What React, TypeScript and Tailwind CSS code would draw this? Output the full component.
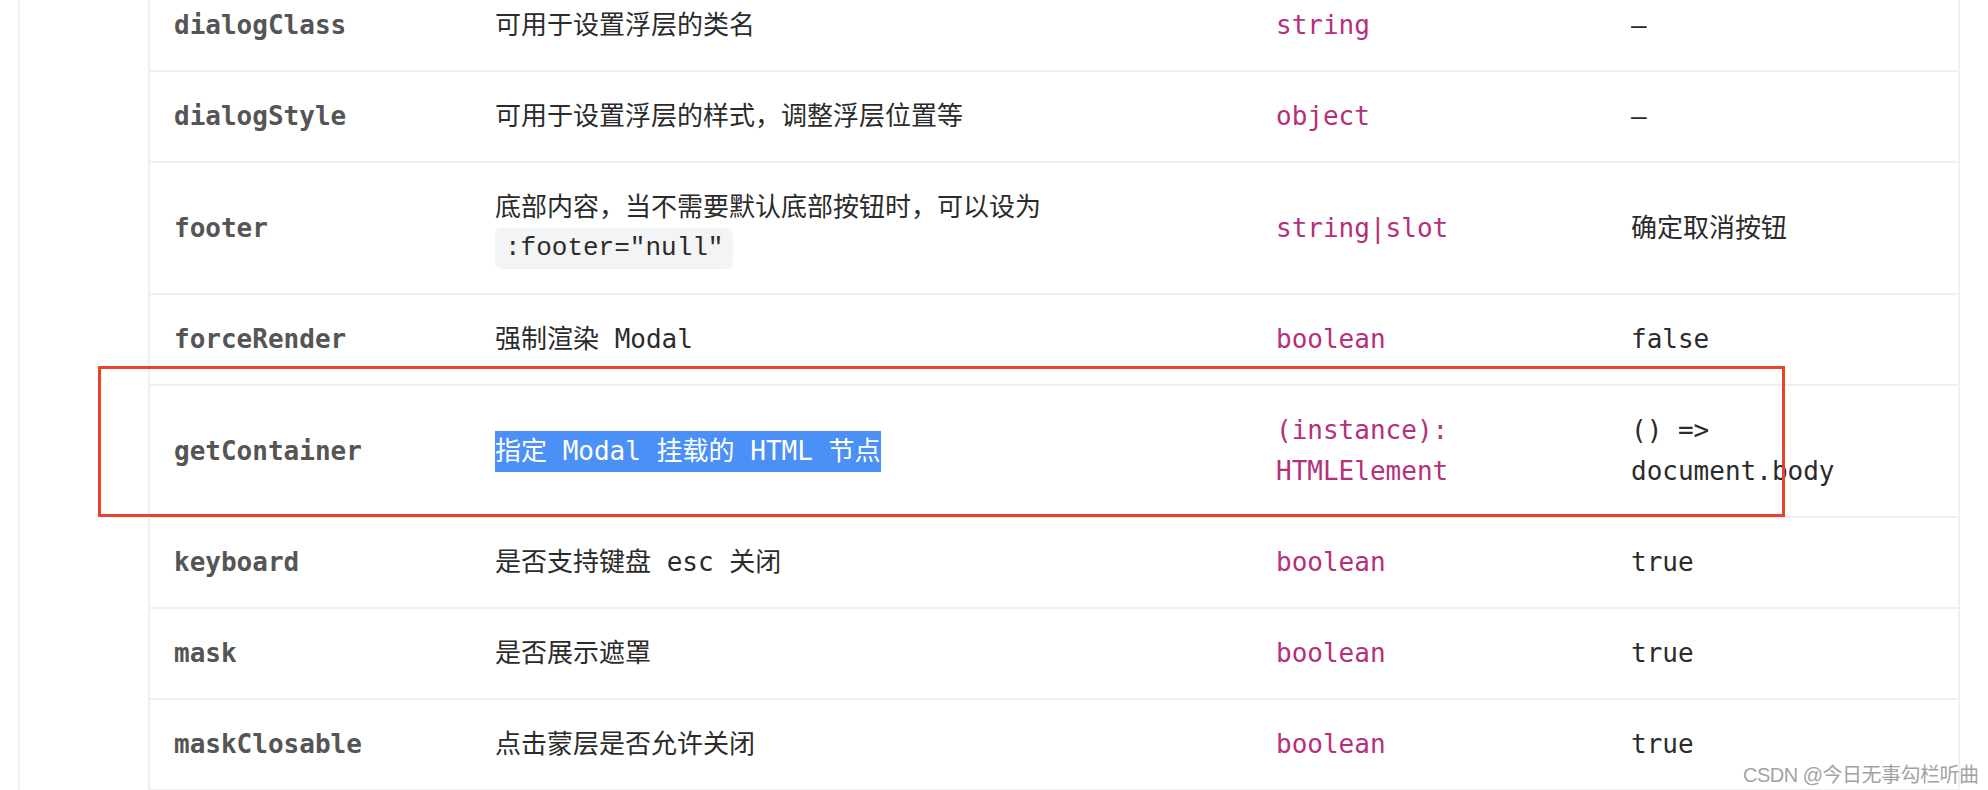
type Row = {
  name: string
  desc: React.ReactNode
  type: React.ReactNode
  def: React.ReactNode
}

const mono = "font-['DejaVu_Sans_Mono','Noto_Sans_CJK_SC',monospace]"

const rows: Row[] = [
  { name: 'dialogClass', desc: '可用于设置浮层的类名', type: 'string', def: '–' },
  { name: 'dialogStyle', desc: '可用于设置浮层的样式，调整浮层位置等', type: 'object', def: '–' },
  {
    name: 'footer',
    desc: (
      <>
        底部内容，当不需要默认底部按钮时，可以设为{' '}
        <code className="inline-block rounded-[6px] bg-[#f3f4f5] px-[10px] align-top leading-[41px]">
          :footer="null"
        </code>
      </>
    ),
    type: 'string|slot',
    def: '确定取消按钮',
  },
  { name: 'forceRender', desc: '强制渲染 Modal', type: 'boolean', def: 'false' },
  {
    name: 'getContainer',
    desc: (
      <span className="inline-block bg-[#4a90f6] text-white">指定 Modal 挂载的 HTML 节点</span>
    ),
    type: '(instance): HTMLElement',
    def: '() => document.body',
  },
  { name: 'keyboard', desc: '是否支持键盘 esc 关闭', type: 'boolean', def: 'true' },
  { name: 'mask', desc: '是否展示遮罩', type: 'boolean', def: 'true' },
  { name: 'maskClosable', desc: '点击蒙层是否允许关闭', type: 'boolean', def: 'true' },
]

export default function App() {
  return (
    <div className={`relative h-[790px] w-[1988px] overflow-hidden bg-white ${mono} text-[26px] leading-[41px]`}>
      <div className="ml-[18px] flex h-full border-l-2 border-[#f2f2f2] pl-[128px]">
        <div className="-mt-[19px] w-[1812px] border-x-2 border-[#f0f0f0]">
          {rows.map((r) => (
            <div
              key={r.name}
              className="grid grid-cols-[321px_781px_355px_351px] items-center border-b-2 border-[#f0f0f0]"
            >
              <div className="px-[24px] py-[24px] font-bold text-[#555555]">{r.name}</div>
              <div className="px-[24px] py-[24px] text-[#2b2b2b]">{r.desc}</div>
              <div className="px-[24px] py-[24px] text-[#b5307a]">{r.type}</div>
              <div className="py-[24px] pl-[24px] pr-[60px] text-[#2b2b2b]">{r.def}</div>
            </div>
          ))}
        </div>
      </div>

      {/* annotation box */}
      <div className="pointer-events-none absolute left-[98px] top-[366px] h-[151px] w-[1687px] border-[3px] border-[#e8412c]" />

      {/* watermark */}
      <div className="absolute left-[1743px] top-[760px] whitespace-nowrap font-['Liberation_Sans','Noto_Sans_CJK_SC',sans-serif] text-[20px] leading-[30px] tracking-[-0.5px] text-[#a3a3a3]">
        CSDN @今日无事勾栏听曲
      </div>
    </div>
  )
}
